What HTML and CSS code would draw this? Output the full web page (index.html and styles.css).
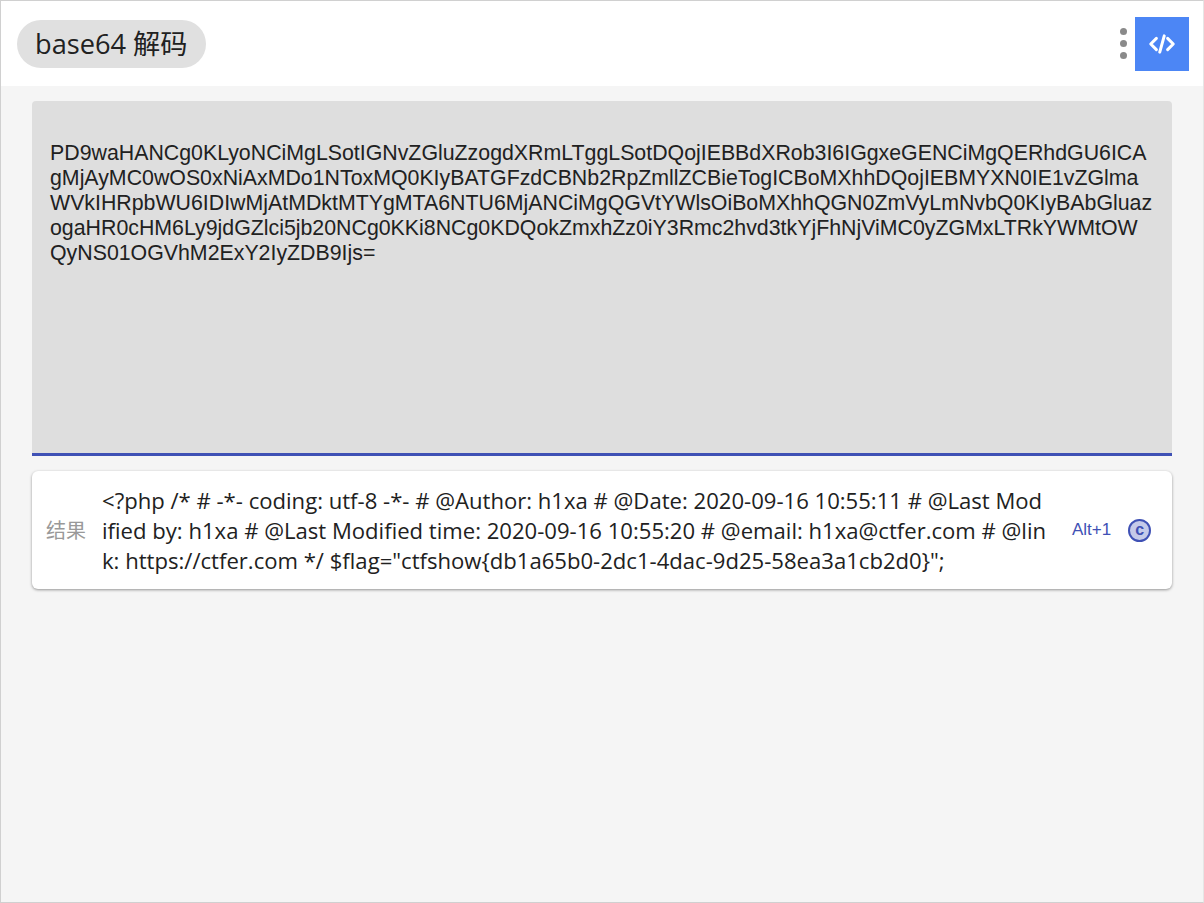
FILE: index.html
```html
<!DOCTYPE html>
<html lang="zh">
<head>
  <meta charset="UTF-8">
  <title>base64 解码</title>
  <link rel="stylesheet" href="styles.css">
</head>
<body>
  <header class="topbar">
    <div class="title">base64 解码</div>
    <div class="actions">
      <div class="dots"><span></span><span></span><span></span></div>
      <div class="code-btn">
        <svg width="30" height="30" viewBox="0 0 24 24" fill="none" stroke="#fff" stroke-width="2.4" stroke-linecap="round" stroke-linejoin="round">
          <path d="M7.5 7.5 3 12l4.5 4.5"/>
          <path d="M16.5 7.5 21 12l-4.5 4.5"/>
          <path d="M13.8 5.5 10.2 18.5"/>
        </svg>
      </div>
    </div>
  </header>
  <main class="content">
    <div class="input-box">PD9waHANCg0KLyoNCiMgLSotIGNvZGluZzogdXRmLTggLSotDQojIEBBdXRob3I6IGgxeGENCiMgQERhdGU6ICAgMjAyMC0wOS0xNiAxMDo1NToxMQ0KIyBATGFzdCBNb2RpZmllZCBieTogICBoMXhhDQojIEBMYXN0IE1vZGlmaWVkIHRpbWU6IDIwMjAtMDktMTYgMTA6NTU6MjANCiMgQGVtYWlsOiBoMXhhQGN0ZmVyLmNvbQ0KIyBAbGluazogaHR0cHM6Ly9jdGZlci5jb20NCg0KKi8NCg0KDQokZmxhZz0iY3Rmc2hvd3tkYjFhNjViMC0yZGMxLTRkYWMtOWQyNS01OGVhM2ExY2IyZDB9Ijs=</div>
    <section class="result">
      <div class="result-label">结果</div>
      <div class="result-text">&lt;?php /* # -*- coding: utf-8 -*- # @Author: h1xa # @Date: 2020-09-16 10:55:11 # @Last Mod<br>ified by: h1xa # @Last Modified time: 2020-09-16 10:55:20 # @email: h1xa@ctfer.com # @lin<br>k: https://ctfer.com */ $flag="ctfshow{db1a65b0-2dc1-4dac-9d25-58ea3a1cb2d0}";</div>
      <div class="shortcut">Alt+1</div>
      <div class="copy-icon">c</div>
    </section>
  </main>
</body>
</html>
```

FILE: styles.css
```css
* {
  margin: 0;
  padding: 0;
  box-sizing: border-box;
}

html, body {
  height: 100%;
}

body {
  display: flex;
  flex-direction: column;
  border: 1px solid #d0d0d0;
  border-right-color: #e6e6e6;
  background: #f5f5f5;
  font-family: "Open Sans", "Noto Sans", "Noto Sans CJK SC", sans-serif;
  color: #212121;
}

.topbar {
  display: flex;
  align-items: center;
  justify-content: space-between;
  height: 85px;
  padding: 0 14px 0 16px;
  background: #fff;
}

.title {
  height: 48px;
  padding: 0 18px;
  border-radius: 24px;
  background: #e0e0e0;
  font-size: 27.2px;
  line-height: 48px;
}

.actions {
  display: flex;
  align-items: center;
  gap: 8px;
}

.dots {
  display: flex;
  flex-direction: column;
  gap: 5px;
}

.dots span {
  width: 7px;
  height: 7px;
  border-radius: 50%;
  background: #8a8a8a;
}

.code-btn {
  display: flex;
  align-items: center;
  justify-content: center;
  width: 54px;
  height: 54px;
  background: #4c86f5;
}

.content {
  flex: 1;
  padding: 15px 31px;
}

.input-box {
  height: 355px;
  padding: 40px 18px 0;
  border-bottom: 3px solid #3f51b5;
  border-radius: 4px 4px 0 0;
  background: #dedede;
  font-family: "Liberation Sans", sans-serif;
  font-size: 21.33px;
  line-height: 25px;
  word-break: break-all;
}

.result {
  display: flex;
  align-items: center;
  height: 118px;
  margin-top: 15px;
  padding: 0 21px 0 14px;
  border-radius: 6px;
  background: #fff;
  box-shadow: 0 1px 3px rgba(0, 0, 0, 0.4);
}

.result-label {
  width: 56px;
  flex-shrink: 0;
  padding-bottom: 2px;
  font-size: 20px;
  color: #999;
}

.result-text {
  width: 970px;
  flex-shrink: 0;
  font-size: 22.1px;
  line-height: 30px;
  white-space: nowrap;
}

.shortcut {
  font-family: "Liberation Sans", sans-serif;
  font-size: 17px;
  color: #3f51b5;
}

.copy-icon {
  width: 23px;
  height: 23px;
  margin-left: 17px;
  border: 2px solid #3f51b5;
  border-radius: 50%;
  background: #c5cae9;
  font-family: "Liberation Sans", sans-serif;
  font-size: 16px;
  font-weight: bold;
  line-height: 17px;
  text-align: center;
  color: #3f51b5;
}
```
